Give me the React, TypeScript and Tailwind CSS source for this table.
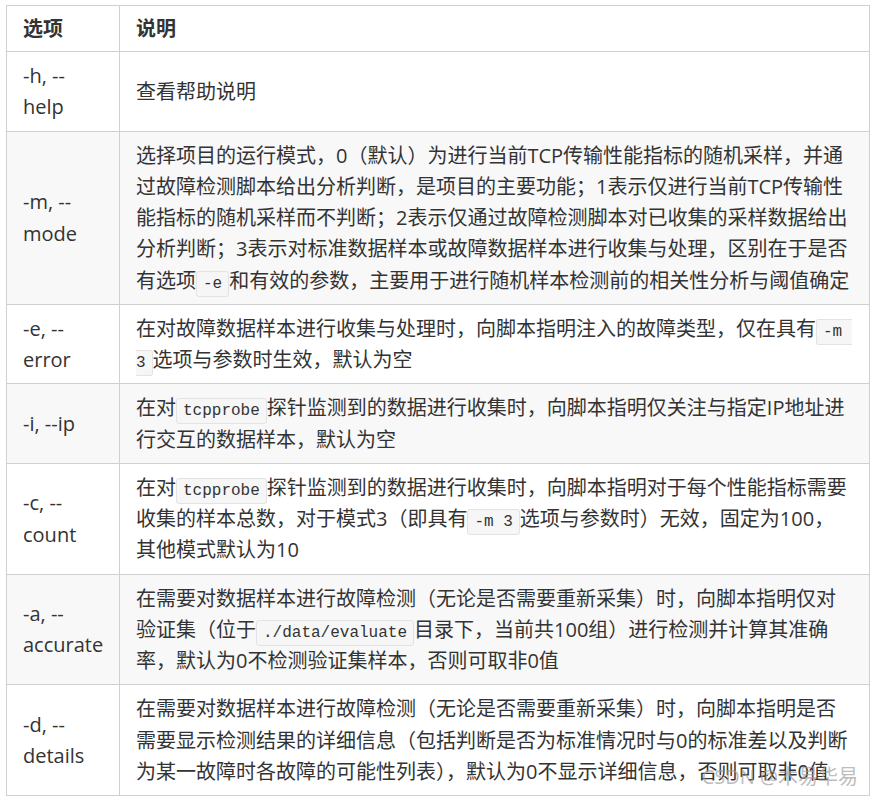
import React from "react";

const code =
  "font-['Liberation_Mono',monospace] text-[16px] leading-none bg-[#f6f6f6] border border-[#e3e3e3] rounded-[3px] px-[6px] py-[3px]";

function C({ children }: { children: React.ReactNode }) {
  return <span className={code}>{children}</span>;
}

type Row = { opt: string[]; lines: React.ReactNode[] };

const rows: Row[] = [
  { opt: ["-h, --", "help"], lines: ["查看帮助说明"] },
  {
    opt: ["-m, --", "mode"],
    lines: [
      "选择项目的运行模式，0（默认）为进行当前TCP传输性能指标的随机采样，并通",
      "过故障检测脚本给出分析判断，是项目的主要功能；1表示仅进行当前TCP传输性",
      "能指标的随机采样而不判断；2表示仅通过故障检测脚本对已收集的采样数据给出",
      "分析判断；3表示对标准数据样本或故障数据样本进行收集与处理，区别在于是否",
      <>
        有选项<C>-e</C>和有效的参数，主要用于进行随机样本检测前的相关性分析与阈值确定
      </>,
    ],
  },
  {
    opt: ["-e, --", "error"],
    lines: [
      <>
        在对故障数据样本进行收集与处理时，向脚本指明注入的故障类型，仅在具有
        <span className="font-['Liberation_Mono',monospace] text-[16px] leading-none bg-[#f6f6f6] border-y border-l border-[#e3e3e3] rounded-l-[3px] pl-[6px] py-[3px]">
          -m{"\u00a0"}
        </span>
      </>,
      <>
        <span className="font-['Liberation_Mono',monospace] text-[16px] leading-none bg-[#f6f6f6] border-y border-r border-[#e3e3e3] rounded-r-[3px] pr-[6px] py-[3px]">
          3
        </span>
        选项与参数时生效，默认为空
      </>,
    ],
  },
  {
    opt: ["-i, --ip"],
    lines: [
      <>
        在对<C>tcpprobe</C>探针监测到的数据进行收集时，向脚本指明仅关注与指定IP地址进
      </>,
      "行交互的数据样本，默认为空",
    ],
  },
  {
    opt: ["-c, --", "count"],
    lines: [
      <>
        在对<C>tcpprobe</C>探针监测到的数据进行收集时，向脚本指明对于每个性能指标需要
      </>,
      <>
        收集的样本总数，对于模式3（即具有<C>-m 3</C>选项与参数时）无效，固定为100，
      </>,
      "其他模式默认为10",
    ],
  },
  {
    opt: ["-a, --", "accurate"],
    lines: [
      "在需要对数据样本进行故障检测（无论是否需要重新采集）时，向脚本指明仅对",
      <>
        验证集（位于<C>./data/evaluate</C>目录下，当前共100组）进行检测并计算其准确
      </>,
      "率，默认为0不检测验证集样本，否则可取非0值",
    ],
  },
  {
    opt: ["-d, --", "details"],
    lines: [
      "在需要对数据样本进行故障检测（无论是否需要重新采集）时，向脚本指明是否",
      "需要显示检测结果的详细信息（包括判断是否为标准情况时与0的标准差以及判断",
      "为某一故障时各故障的可能性列表），默认为0不显示详细信息，否则可取非0值",
    ],
  },
];

export default function App() {
  return (
    <div className="relative w-[872px] h-[797px] bg-white overflow-hidden font-['Open_Sans','Noto_Sans_CJK_SC',sans-serif] text-[20px] text-[#333]">
      <table className="ml-[6px] mt-[5px] w-[864px] table-fixed border-collapse">
        <colgroup>
          <col className="w-[113px]" />
          <col />
        </colgroup>
        <thead>
          <tr className="bg-white">
            <th className="border border-[#d0d0d0] px-4 py-[7px] leading-[31px] text-left font-bold">选项</th>
            <th className="border border-[#d0d0d0] px-4 py-[7px] leading-[31px] text-left font-bold">说明</th>
          </tr>
        </thead>
        <tbody>
          {rows.map((r, i) => (
            <tr key={i} className={i % 2 === 1 ? "bg-[#f8f8f8]" : "bg-white"}>
              <td className="border border-[#d0d0d0] px-4 py-2 leading-[31.25px] align-middle">
                {r.opt.map((o, j) => (
                  <div key={j} className="whitespace-nowrap">{o}</div>
                ))}
              </td>
              <td className="border border-[#d0d0d0] pl-4 pr-0 py-2 leading-[31.25px] align-middle overflow-hidden">
                {r.lines.map((l, j) => (
                  <div key={j} className="whitespace-nowrap">{l}</div>
                ))}
              </td>
            </tr>
          ))}
        </tbody>
      </table>
      <div className="absolute right-[14px] bottom-[6px] text-[20px] leading-[28px] text-[#a0a0a0]/70 font-['Open_Sans','Noto_Sans_CJK_SC',sans-serif]">
        CSDN @木易华易
      </div>
    </div>
  );
}
